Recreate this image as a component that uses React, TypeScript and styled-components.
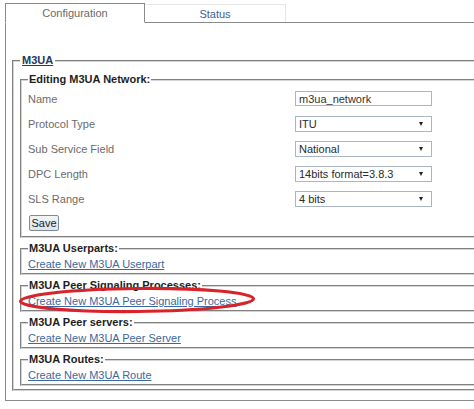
import styled, { createGlobalStyle } from 'styled-components';

const GlobalStyle = createGlobalStyle`
  body {
    margin: 0;
    background: #fff;
    overflow: hidden;
    font-family: "Liberation Sans", Arial, sans-serif;
    font-size: 11px;
  }
`;

type Field = {
  label: string
  value: string
  kind: 'text' | 'select'
}

const fields: Field[] = [
  { label: 'Name', value: 'm3ua_network', kind: 'text' },
  { label: 'Protocol Type', value: 'ITU', kind: 'select' },
  { label: 'Sub Service Field', value: 'National', kind: 'select' },
  { label: 'DPC Length', value: '14bits format=3.8.3', kind: 'select' },
  { label: 'SLS Range', value: '4 bits', kind: 'select' },
];

const sections = [
  { title: 'M3UA Userparts:', link: 'Create New M3UA Userpart' },
  { title: 'M3UA Peer Signaling Processes:', link: 'Create New M3UA Peer Signaling Process', marked: true },
  { title: 'M3UA Peer servers:', link: 'Create New M3UA Peer Server' },
  { title: 'M3UA Routes:', link: 'Create New M3UA Route' },
];

export default function App() {
  return (
    <Page>
      <GlobalStyle />
      <TabBar>
        <Tab $active>Configuration</Tab>
        <Tab>Status</Tab>
      </TabBar>

      <Panel>
        <OuterSet>
          <OuterLegend>M3UA</OuterLegend>

          <BlockSet>
            <Legend>Editing M3UA Network:</Legend>
            <FormGrid>
              {fields.map(f => (
                <Row key={f.label}>
                  <Label>{f.label}</Label>
                  {f.kind === 'text' ? (
                    <TextInput defaultValue={f.value} />
                  ) : (
                    <SelectWrap>
                      <Select defaultValue={f.value}>
                        <option>{f.value}</option>
                      </Select>
                    </SelectWrap>
                  )}
                </Row>
              ))}
            </FormGrid>
            <SaveButton>Save</SaveButton>
          </BlockSet>

          {sections.map(s => (
            <LinkSet key={s.title}>
              <Legend>{s.title}</Legend>
              <LinkLine href="#">{s.link}</LinkLine>
              {s.marked && (
                <Mark viewBox="0 0 240 28" width="240" height="28">
                  {/* hand-drawn red annotation round the link */}
                  <ellipse cx="119" cy="14" rx="116.5" ry="11.5" fill="none" stroke="#d8232a" strokeWidth="3.2" transform="rotate(-0.6 119 14)" />
                </Mark>
              )}
            </LinkSet>
          ))}
        </OuterSet>
      </Panel>
    </Page>
  );
}

const Page = styled.div`
  padding: 3px 0 0 5px;
`;

const TabBar = styled.div`
  display: flex;
  align-items: flex-end;
  height: 19px;
`;

const Tab = styled.div<{ $active?: boolean }>`
  box-sizing: border-box;
  width: 140px;
  display: flex;
  align-items: center;
  justify-content: center;
  position: relative;
  z-index: 1;
  ${p => p.$active ? `
    height: 20px;
    margin-bottom: -1px;
    border: 1px solid #8a8a8a;
    border-bottom: 1px solid #fff;
    background: #fff;
    color: #6a6a6a;
  ` : `
    width: 141px;
    height: 18px;
    border-top: 1px solid #e6e6e6;
    border-right: 1px solid #e6e6e6;
    color: #3c5f92;
  `}
`;

const Panel = styled.div`
  box-sizing: border-box;
  width: 580px;
  border: 1px solid #8a8a8a;
  border-right: none;
  padding: 31px 0 9px 0;
`;

const OuterSet = styled.fieldset`
  margin: 0 0 0 6px;
  padding: 6px 0 3px 6px;
  border: 2px groove #d4d4d4;
  border-right: none;
  min-width: 0;
`;

const OuterLegend = styled.legend`
  padding: 0 2px;
  margin-left: 0;
  line-height: 13px;
  font-weight: bold;
  color: #24395c;
  text-decoration: underline;
`;

const BlockSet = styled.fieldset`
  margin: 0;
  padding: 0 0 5px 6px;
  border: 2px groove #d4d4d4;
  border-right: none;
  min-width: 0;
`;

const LinkSet = styled(BlockSet)`
  position: relative;
  margin-top: 4px;
  padding: 3px 0 2px 6px;
`;

const Legend = styled.legend`
  padding: 0 1px;
  line-height: 13px;
  font-weight: bold;
  color: #1e1e22;
`;

const FormGrid = styled.div`
  display: grid;
  grid-auto-rows: 25px;
`;

const Row = styled.div`
  display: grid;
  grid-template-columns: 267px 137px;
  align-items: center;
`;

const Label = styled.span`
  color: #6b6b6b;
  font-size: 11px;
`;

const TextInput = styled.input`
  box-sizing: border-box;
  height: 15px;
  width: 137px;
  margin: 0;
  padding: 0 3px;
  border: 1px solid #a9b6c6;
  font-family: inherit;
  font-size: 11px;
  color: #333;
  outline: none;
`;

const SelectWrap = styled.div`
  position: relative;
  width: 137px;
  height: 16px;

  &::after {
    content: '';
    position: absolute;
    right: 9px;
    top: 6px;
    border-left: 2.5px solid transparent;
    border-right: 2.5px solid transparent;
    border-top: 4px solid #222;
  }
`;

const Select = styled.select`
  box-sizing: border-box;
  appearance: none;
  width: 100%;
  height: 100%;
  margin: 0;
  padding: 0 3px;
  border: 1px solid #a9b6c6;
  border-radius: 0;
  background: #fff;
  font-family: inherit;
  font-size: 11px;
  color: #2a2a2a;
`;

const SaveButton = styled.button`
  box-sizing: border-box;
  display: block;
  margin: 4px 0 0 1px;
  height: 16px;
  width: 30px;
  padding: 0;
  border: 1px solid #7d8b99;
  border-radius: 2px;
  background: linear-gradient(#f2f5f8, #dde4eb);
  font-family: inherit;
  font-size: 11px;
  color: #222;
`;

const LinkLine = styled.a`
  display: block;
  line-height: 13px;
  color: #3a68a0;
  text-decoration: underline;
`;

const Mark = styled.svg`
  position: absolute;
  left: -4px;
  top: -6px;
  pointer-events: none;
`;
